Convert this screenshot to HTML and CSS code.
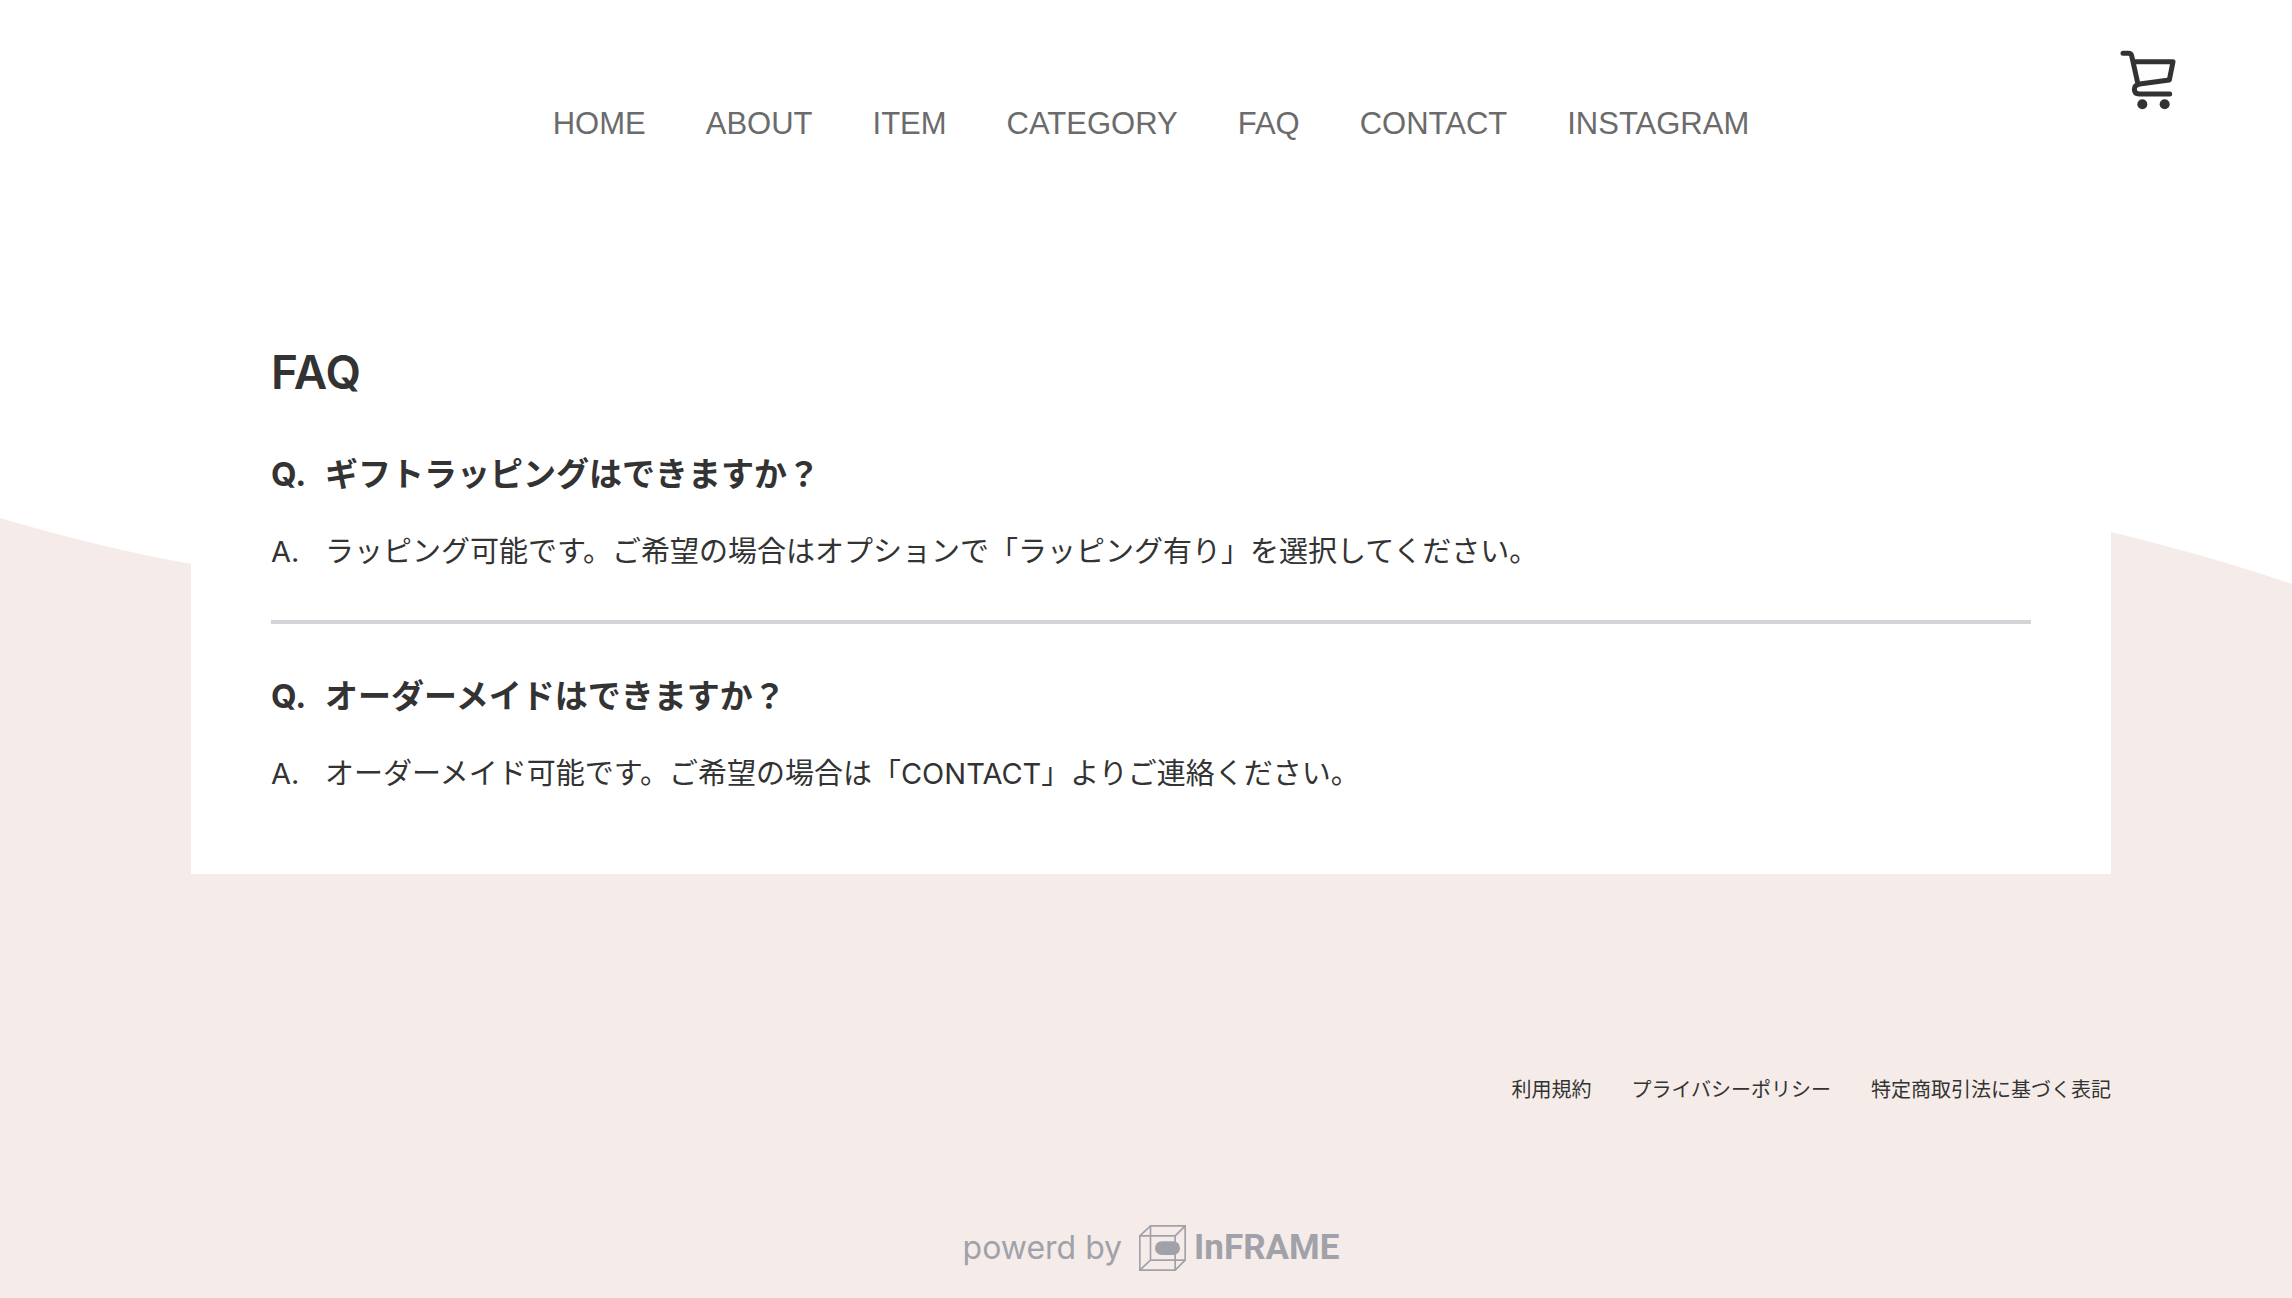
FILE: index.html
```html
<!DOCTYPE html>
<html lang="ja">
<head>
<meta charset="utf-8">
<meta name="viewport" content="width=device-width, initial-scale=1">
<title>FAQ</title>
<link rel="stylesheet" href="styles.css">
</head>
<body>
<div class="page">
  <div class="backdrop" aria-hidden="true">
    <svg class="wave" viewBox="0 500 2292 140" preserveAspectRatio="none">
      <path d="M0 518Q102 548 191 564C900 690 1400 370 2111 532Q2210 556 2292 584V640H0Z"/>
    </svg>
    <div class="backdrop-fill"></div>
  </div>

  <header class="header">
    <nav class="nav">
      <a href="#">HOME</a>
      <a href="#">ABOUT</a>
      <a href="#">ITEM</a>
      <a href="#">CATEGORY</a>
      <a href="#">FAQ</a>
      <a href="#">CONTACT</a>
      <a href="#">INSTAGRAM</a>
    </nav>
    <a class="cart" href="#" aria-label="カート">
      <svg viewBox="60 60 171 180" fill="none" stroke="currentColor" stroke-linecap="round" stroke-linejoin="round">
        <path stroke-width="15" d="M69 70H85Q93 70 95 77L114 163M100 95H219L208 150L119 162Q103 165 103 178Q103 192 118 192H209"/>
        <g fill="currentColor" stroke="none"><circle cx="127" cy="223" r="15"/><circle cx="194" cy="223" r="15"/></g>
      </svg>
    </a>
  </header>

  <main class="card">
    <h1>FAQ</h1>
    <dl class="faq">
      <div class="entry">
        <dt><span>Q.</span><span>ギフトラッピングはできますか？</span></dt>
        <dd><span>A.</span><span>ラッピング可能です。ご希望の場合はオプションで「ラッピング有り」を選択してください。</span></dd>
      </div>
      <div class="entry">
        <dt><span>Q.</span><span>オーダーメイドはできますか？</span></dt>
        <dd><span>A.</span><span>オーダーメイド可能です。ご希望の場合は「CONTACT」よりご連絡ください。</span></dd>
      </div>
    </dl>
  </main>

  <footer class="footer">
    <div class="legal">
      <a href="#">利用規約</a>
      <a href="#">プライバシーポリシー</a>
      <a href="#">特定商取引法に基づく表記</a>
    </div>
    <a class="credit" href="#">
      <span>powerd by</span>
      <svg class="cube" viewBox="597 75 141 138" fill="none" stroke="currentColor" stroke-width="5">
        <path d="M599.500 107.500H705.500V210.500H599.500ZM631.500 77.500H735.500V180.500H631.500ZM599.500 107.500L631.500 77.500M705.500 107.500L735.500 77.500M599.500 210.500L631.500 180.500M705.500 210.500L735.500 180.500"/>
        <rect x="645" y="124" width="75" height="41" rx="20" fill="currentColor" stroke="none"/>
      </svg>
      <span class="brand">InFRAME</span>
    </a>
  </footer>
</div>
</body>
</html>
```
FILE: styles.css
```css
* { box-sizing: border-box; }

body {
  margin: 0;
  background: #fff;
  color: #333;
  font-family: Inter, "Noto Sans CJK JP", sans-serif;
}

a { color: inherit; text-decoration: none; }

svg { display: block; }

.page {
  position: relative;
  display: flex;
  flex-direction: column;
  min-height: 100vh;
  padding-left: 10px;
}

/* wave artwork behind the content */
.backdrop {
  position: absolute;
  inset: 500px 0 0;
  z-index: -1;
  display: flex;
  flex-direction: column;
}

.wave { width: 100%; height: 140px; fill: #f5ece9; }

.backdrop-fill { flex: 1; background: #f5ece9; }

.header {
  display: grid;
  grid-template-columns: 1fr auto 1fr;
  padding: 50px 115px 0;
}

.nav {
  grid-column: 2;
  display: flex;
  flex-wrap: wrap;
  gap: 0 60px;
  margin-top: 50px;
  color: #6b6b6b;
  font-family: "Liberation Sans", sans-serif;
  font-size: 31px;
  line-height: 48px;
}

.cart { justify-self: end; align-self: start; }

.cart svg { width: 57px; height: 60px; }

.card {
  width: 100%;
  max-width: 1920px;
  margin: 112px auto 0;
  padding: 80px 80px 78px;
  background: #fff;
}

h1 {
  margin: 0 0 46px;
  font-size: 46px;
  font-weight: 600;
  line-height: 64px;
}

.faq { margin: 0; }

.entry + .entry {
  margin-top: 46px;
  padding-top: 48px;
  border-top: 4px solid #d4d4d8;
}

dt, dd {
  display: grid;
  grid-template-columns: 54px 1fr;
  margin: 0;
}

dt {
  margin-bottom: 32px;
  font-size: 33px;
  font-weight: 700;
  line-height: 48px;
}

dd { font-size: 29px; line-height: 44px; }

.footer {
  width: 100%;
  max-width: 1920px;
  margin: 200px auto 0;
  padding-bottom: 26px;
}

.legal {
  display: flex;
  flex-wrap: wrap;
  justify-content: flex-end;
  gap: 0 40px;
  font-size: 20px;
  line-height: 32px;
}

.credit {
  display: flex;
  align-items: center;
  justify-content: center;
  width: fit-content;
  margin: 118px auto 0;
  color: #a1a1aa;
  font-size: 32px;
  line-height: 48px;
}

.cube { width: 47px; height: 46px; margin: 0 8px 0 17px; }

.brand { font-family: Roboto, sans-serif; font-size: 35px; font-weight: 700; }
```
